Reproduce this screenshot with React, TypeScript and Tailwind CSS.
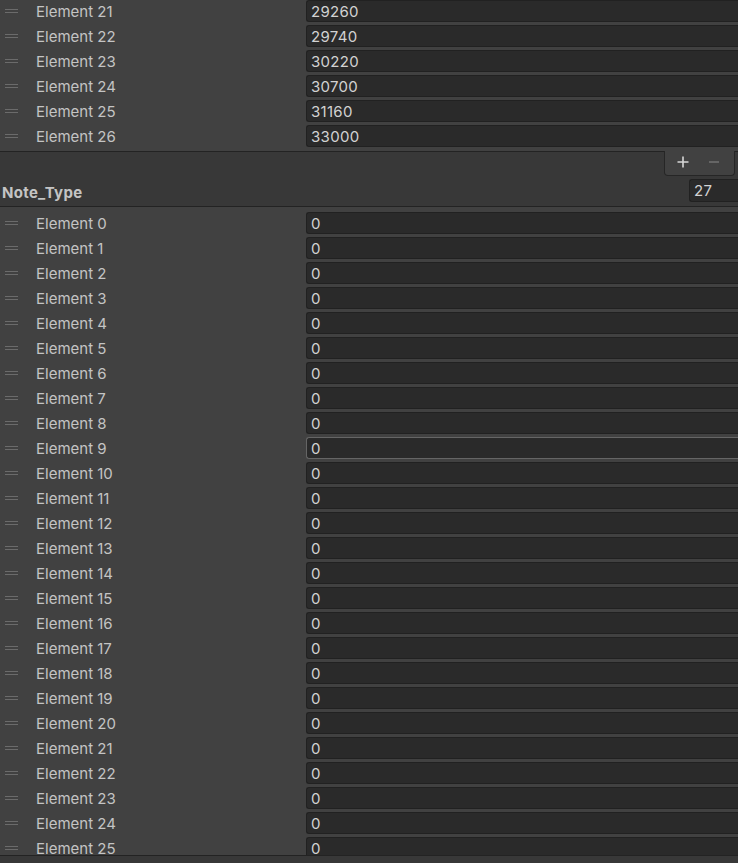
import React from "react";

const topValues = [
  { i: 21, v: "29260" },
  { i: 22, v: "29740" },
  { i: 23, v: "30220" },
  { i: 24, v: "30700" },
  { i: 25, v: "31160" },
  { i: 26, v: "33000" },
];

function Handle() {
  return (
    <div className="flex w-[13px] flex-col gap-[2px] ml-[5px]">
      <span className="block h-px bg-[#6b6b6b]" />
      <span className="block h-px bg-[#6b6b6b]" />
    </div>
  );
}

function Row({ label, value, hover }: { label: string; value: string; hover?: boolean }) {
  return (
    <div className="flex h-[25px] items-center">
      <Handle />
      <span className="ml-[18px] w-[270px] pt-[2px] text-[15px] text-[#c4c4c4]">{label}</span>
      <div
        className={`flex h-[22px] flex-1 items-center rounded-l-[3px] border border-r-0 bg-[#2a2a2a] pl-[4px] pt-[2px] text-[15px] tracking-[0.3px] text-[#d2d2d2] ${
          hover ? "border-[#656565]" : "border-[#212121]"
        }`}
      >
        {value}
      </div>
    </div>
  );
}

export default function App() {
  const noteRows = Array.from({ length: 26 }, (_, i) => i);
  return (
    <div
      className="h-[863px] w-[738px] overflow-hidden bg-[#383838]"
      style={{ fontFamily: "Inter, 'Noto Sans', sans-serif" }}
    >
      {/* first list (tail) */}
      <div className="h-[152px] overflow-hidden border-b border-[#232323] bg-[#414141]">
        <div className="-mt-[1.5px]">
          {topValues.map((r) => (
            <Row key={r.i} label={`Element ${r.i}`} value={r.v} />
          ))}
        </div>
      </div>

      {/* footer with + / - */}
      <div className="flex justify-end pr-[3px]">
        <div className="-mt-px flex h-[25px] w-[71px] items-center justify-center gap-[19px] rounded-b-[4px] border border-t-0 border-[#262626] bg-[#414141] pb-[2px] pr-[2px]">
          <svg width="12" height="12" viewBox="0 0 12 12">
            <path d="M6 0.5V11.5M0.5 6H11.5" stroke="#d6d6d6" strokeWidth="1.6" fill="none" />
          </svg>
          <svg width="12" height="12" viewBox="0 0 12 12">
            <path d="M1 6H11" stroke="#6e6e6e" strokeWidth="1.6" fill="none" />
          </svg>
        </div>
      </div>

      {/* Note_Type header */}
      <div className="flex h-[31px] items-center border-b border-[#232323]">
        <span className="ml-[2px] mt-[5px] flex-1 text-[15px] font-bold tracking-[0.3px] text-[#c4c4c4]">Note_Type</span>
        <div className="-mt-[1px] flex h-[23px] w-[49px] items-center rounded-l-[3px] border border-r-0 border-[#212121] bg-[#2a2a2a] pl-[4px] pt-[2px] text-[15px] tracking-[0.3px] text-[#d2d2d2]">
          27
        </div>
      </div>

      {/* second list */}
      <div className="h-[649px] overflow-hidden border-b border-[#232323] bg-[#414141] pt-[3.5px]">
        {noteRows.map((i) => (
          <Row key={i} label={`Element ${i}`} value="0" hover={i === 9} />
        ))}
      </div>
    </div>
  );
}
